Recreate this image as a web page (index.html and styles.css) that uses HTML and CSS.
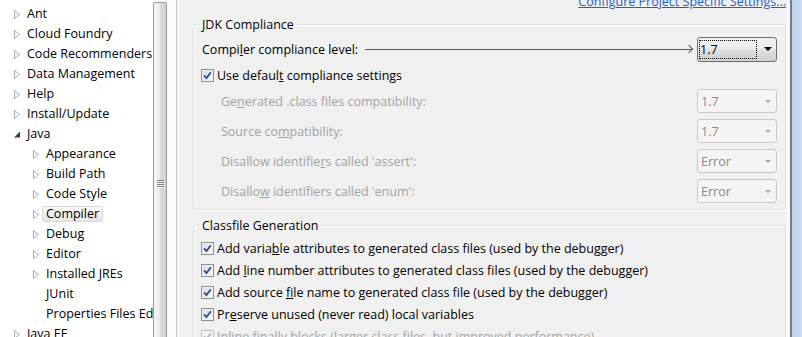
FILE: index.html
```html
<!DOCTYPE html>
<html lang="en">
<head>
  <meta charset="UTF-8">
  <meta name="viewport" content="width=device-width, initial-scale=1.0">
  <title>Preferences - Java Compiler</title>
  <link rel="stylesheet" href="styles.css">
</head>
<body>
  <div class="nav">
    <ul class="tree">
      <li><svg class="twisty" viewBox="0 0 6 9"><path d="M0.5 0.5 L5.5 4.5 L0.5 8.5 Z" fill="#fff" stroke="#a8a8a8"/></svg><span class="label">Ant</span></li>
      <li><svg class="twisty" viewBox="0 0 6 9"><path d="M0.5 0.5 L5.5 4.5 L0.5 8.5 Z" fill="#fff" stroke="#a8a8a8"/></svg><span class="label">Cloud Foundry</span></li>
      <li><svg class="twisty" viewBox="0 0 6 9"><path d="M0.5 0.5 L5.5 4.5 L0.5 8.5 Z" fill="#fff" stroke="#a8a8a8"/></svg><span class="label">Code Recommenders</span></li>
      <li><svg class="twisty" viewBox="0 0 6 9"><path d="M0.5 0.5 L5.5 4.5 L0.5 8.5 Z" fill="#fff" stroke="#a8a8a8"/></svg><span class="label">Data Management</span></li>
      <li><svg class="twisty" viewBox="0 0 6 9"><path d="M0.5 0.5 L5.5 4.5 L0.5 8.5 Z" fill="#fff" stroke="#a8a8a8"/></svg><span class="label">Help</span></li>
      <li><svg class="twisty" viewBox="0 0 6 9"><path d="M0.5 0.5 L5.5 4.5 L0.5 8.5 Z" fill="#fff" stroke="#a8a8a8"/></svg><span class="label">Install/Update</span></li>
      <li><svg class="twisty" viewBox="0 0 6 9"><path d="M6 1.5 L6 7.5 L0 7.5 Z" fill="#3a3a3a"/></svg><span class="label">Java</span></li>
      <li class="child"><svg class="twisty" viewBox="0 0 6 9"><path d="M0.5 0.5 L5.5 4.5 L0.5 8.5 Z" fill="#fff" stroke="#a8a8a8"/></svg><span class="label">Appearance</span></li>
      <li class="child"><svg class="twisty" viewBox="0 0 6 9"><path d="M0.5 0.5 L5.5 4.5 L0.5 8.5 Z" fill="#fff" stroke="#a8a8a8"/></svg><span class="label">Build Path</span></li>
      <li class="child"><svg class="twisty" viewBox="0 0 6 9"><path d="M0.5 0.5 L5.5 4.5 L0.5 8.5 Z" fill="#fff" stroke="#a8a8a8"/></svg><span class="label">Code Style</span></li>
      <li class="child"><svg class="twisty" viewBox="0 0 6 9"><path d="M0.5 0.5 L5.5 4.5 L0.5 8.5 Z" fill="#fff" stroke="#a8a8a8"/></svg><span class="label selected">Compiler</span></li>
      <li class="child"><svg class="twisty" viewBox="0 0 6 9"><path d="M0.5 0.5 L5.5 4.5 L0.5 8.5 Z" fill="#fff" stroke="#a8a8a8"/></svg><span class="label">Debug</span></li>
      <li class="child"><svg class="twisty" viewBox="0 0 6 9"><path d="M0.5 0.5 L5.5 4.5 L0.5 8.5 Z" fill="#fff" stroke="#a8a8a8"/></svg><span class="label">Editor</span></li>
      <li class="child"><svg class="twisty" viewBox="0 0 6 9"><path d="M0.5 0.5 L5.5 4.5 L0.5 8.5 Z" fill="#fff" stroke="#a8a8a8"/></svg><span class="label">Installed JREs</span></li>
      <li class="child"><span class="twisty"></span><span class="label">JUnit</span></li>
      <li class="child"><span class="twisty"></span><span class="label">Properties Files Editor</span></li>
      <li><svg class="twisty" viewBox="0 0 6 9"><path d="M0.5 0.5 L5.5 4.5 L0.5 8.5 Z" fill="#fff" stroke="#a8a8a8"/></svg><span class="label">Java EE</span></li>
    </ul>
    <div class="scroll">
      <div class="thumb"><div class="grip"></div></div>
    </div>
  </div>

  <div class="page">
    <div class="topbar"><a href="#">Configure Project Specific Settings...</a></div>

    <fieldset class="group jdk">
      <legend>JDK Compliance</legend>
      <div class="row">
        <span>Compi<u>l</u>er compliance level:</span>
        <span class="leader"></span>
        <div class="combo active"><span class="value">1.7</span><span class="arrow"></span></div>
      </div>
      <div class="row check">
        <span class="cb"><svg viewBox="0 0 11 11"><path d="M2 5.3 L4.4 8 L8.8 2.4" fill="none" stroke="#2f4f94" stroke-width="1.8"/></svg></span>
        <span>Use defaul<u>t</u> compliance settings</span>
      </div>
      <div class="row off">
        <span class="sub">Ge<u>n</u>erated .class files compatibility:</span>
        <div class="combo"><span class="value">1.7</span><span class="arrow"></span></div>
      </div>
      <div class="row off">
        <span class="sub">Source co<u>m</u>patibility:</span>
        <div class="combo"><span class="value">1.7</span><span class="arrow"></span></div>
      </div>
      <div class="row off">
        <span class="sub">Disallow identifie<u>r</u>s called 'assert':</span>
        <div class="combo"><span class="value">Error</span><span class="arrow"></span></div>
      </div>
      <div class="row off">
        <span class="sub">Disallo<u>w</u> identifiers called 'enum':</span>
        <div class="combo"><span class="value">Error</span><span class="arrow"></span></div>
      </div>
    </fieldset>

    <fieldset class="group classfile">
      <legend>Classfile Generation</legend>
      <div class="row check">
        <span class="cb"><svg viewBox="0 0 11 11"><path d="M2 5.3 L4.4 8 L8.8 2.4" fill="none" stroke="#2f4f94" stroke-width="1.8"/></svg></span>
        <span>Add varia<u>b</u>le attributes to generated class files (used by the debugger)</span>
      </div>
      <div class="row check">
        <span class="cb"><svg viewBox="0 0 11 11"><path d="M2 5.3 L4.4 8 L8.8 2.4" fill="none" stroke="#2f4f94" stroke-width="1.8"/></svg></span>
        <span>Add <u>l</u>ine number attributes to generated class files (used by the debugger)</span>
      </div>
      <div class="row check">
        <span class="cb"><svg viewBox="0 0 11 11"><path d="M2 5.3 L4.4 8 L8.8 2.4" fill="none" stroke="#2f4f94" stroke-width="1.8"/></svg></span>
        <span>Add source <u>f</u>ile name to generated class file (used by the debugger)</span>
      </div>
      <div class="row check">
        <span class="cb"><svg viewBox="0 0 11 11"><path d="M2 5.3 L4.4 8 L8.8 2.4" fill="none" stroke="#2f4f94" stroke-width="1.8"/></svg></span>
        <span>Pr<u>e</u>serve unused (never read) local variables</span>
      </div>
      <div class="row check off">
        <span class="cb"><svg viewBox="0 0 11 11"><path d="M2 5.3 L4.4 8 L8.8 2.4" fill="none" stroke="#b4b4b4" stroke-width="1.8"/></svg></span>
        <span>Inline finally blocks (larger class files, but improved performance)</span>
      </div>
    </fieldset>
  </div>

  <div class="frame"></div>
</body>
</html>
```

FILE: styles.css
```css
body {
  margin: 0;
  height: 337px;
  overflow: hidden;
  display: flex;
  background: #f0f0f0;
  font-family: 'Open Sans', 'Noto Sans', sans-serif;
  font-size: 12.5px;
  color: #000;
}

/* left preference tree */
.nav {
  width: 177px;
  flex: none;
  display: flex;
  background: #fff;
  border-right: 1px solid #c8c8c8;
  box-sizing: border-box;
}

.tree {
  width: 153px;
  flex: none;
  margin: 0;
  padding: 4px 0 0;
  list-style: none;
  overflow: hidden;
  white-space: nowrap;
}

.tree li {
  display: flex;
  align-items: center;
  height: 20px;
  padding-left: 14px;
}

.tree li.child {
  padding-left: 33px;
}

.twisty {
  width: 6px;
  height: 9px;
  flex: none;
  margin-right: 3px;
}

.label {
  padding: 0 3px;
  border: 1px solid transparent;
  line-height: 14px;
}

.label.selected {
  background: linear-gradient(#f9f9f9, #e6e6e6);
  border-color: #d9d9d9;
  border-radius: 2px;
}

.scroll {
  width: 23px;
  flex: none;
  padding-top: 2px;
  background: #fbfbfb;
}

.thumb {
  width: 14px;
  height: 420px;
  box-sizing: border-box;
  padding-top: 177px;
  border: 1px solid #9a9a9a;
  border-radius: 2px;
  background: linear-gradient(to right, #f6f6f6, #ececec 45%, #dadada 55%, #d2d2d2);
}

.grip {
  width: 7px;
  height: 8px;
  margin: 0 auto;
  background: repeating-linear-gradient(#7e7e7e 0 1px, #fafafa 1px 2px);
}

/* right settings page */
.page {
  width: 610px;
  flex: none;
  box-sizing: border-box;
  padding: 0 1px 0 16px;
}

.topbar {
  height: 17px;
  display: flex;
  justify-content: flex-end;
}

.topbar a {
  margin-top: -6px;
  height: 15px;
  line-height: 15px;
  color: #1c63c6;
}

.group {
  margin: 0 0 8px;
  min-width: 0;
  border: 1px solid #d5dfe5;
  border-radius: 3px;
  box-shadow: inset 1px 1px 0 #fff, 1px 1px 0 #fff;
}

.group legend {
  margin-left: -2px;
  padding: 0 2px;
  line-height: 15px;
}

.jdk {
  padding: 2px 8px 3px;
}

.classfile {
  padding: 4px 8px 0;
}

.row {
  display: flex;
  align-items: center;
  height: 30px;
  white-space: nowrap;
}

.row.check {
  height: 22px;
}

.row.off {
  color: #a3a3a3;
}

.sub {
  padding-left: 19px;
}

.leader {
  flex: 1;
  height: 1px;
  margin: 0 5px 0 7px;
  background: #595959;
  position: relative;
}

.leader::after {
  content: "";
  position: absolute;
  right: 0;
  top: -3px;
  width: 5px;
  height: 5px;
  border-top: 1px solid #595959;
  border-right: 1px solid #595959;
  transform: rotate(45deg);
}

.cb {
  width: 13px;
  height: 13px;
  flex: none;
  box-sizing: border-box;
  margin: 0 3px 0 -1px;
  border: 1px solid #8e8f8f;
  background: linear-gradient(135deg, #d8dbe0, #f9f9f9);
  box-shadow: inset 0 0 0 1px #f4f4f4;
}

.cb svg {
  display: block;
  width: 11px;
  height: 11px;
}

.row.off .cb {
  border-color: #c2c2c2;
  background: #f4f4f4;
}

.combo {
  margin-left: auto;
  flex: none;
  width: 80px;
  height: 24px;
  box-sizing: border-box;
  display: flex;
  align-items: center;
  padding-left: 3px;
  border: 1px solid #c9c9c9;
  border-radius: 3px;
  background: #f4f4f4;
  color: #8a8a8a;
}

.combo .arrow {
  margin-left: auto;
  margin-right: 5px;
  border: 3px solid transparent;
  border-top-color: #acacac;
  border-bottom: 0;
}

.combo.active {
  height: 25px;
  padding-left: 1px;
  border-color: #707070;
  background: linear-gradient(#f2f2f2, #ebebeb 45%, #dddddd 55%, #cfcfcf);
  color: #000;
}

.combo.active .value {
  width: 58px;
  height: 19px;
  box-sizing: border-box;
  border: 1px dotted #000;
  line-height: 17px;
}

.combo.active .arrow {
  margin-right: 4px;
  border-width: 4px 4px 0;
  border-top-color: #000;
}

/* window frame at the right edge */
.frame {
  flex: 1;
  background: linear-gradient(to right, #f8f8f8 0 3px, #7c7c7c 3px 5px, #bed3ec 5px, #cadcf1);
}
```
